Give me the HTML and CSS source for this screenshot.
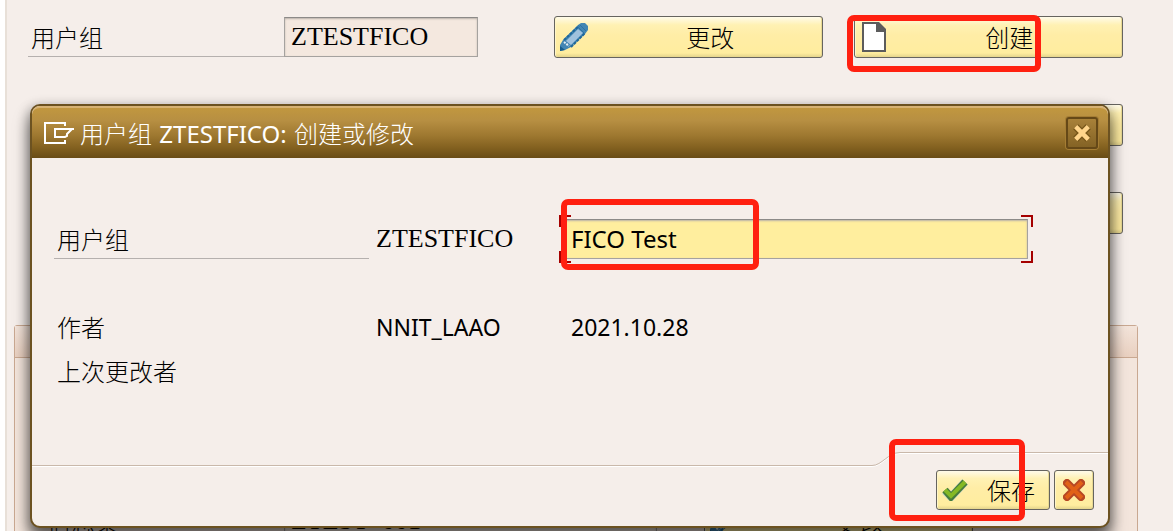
FILE: index.html
```html
<!DOCTYPE html>
<html lang="zh-CN">
<head>
<meta charset="utf-8">
<title>用户组</title>
<link rel="stylesheet" href="styles.css">
</head>
<body>
<svg class="defs" aria-hidden="true">
  <symbol id="pencil" viewBox="0 0 28 28">
    <path d="M0 28V22L3 17L18 2L21 0H25L28 3V7L25 11L11 24L5 27Z" fill="#4286b3"/>
    <path d="M6 18L18 6L23 10L11 22Z" fill="#9fc1dd"/>
    <path d="M4 17L19 3M11 24L25 10" fill="none" stroke="#1f679b" stroke-width="2" stroke-dasharray="3 1"/>
    <path d="M18 4L24 10M20 2L26 8" fill="none" stroke="#2b72a6" stroke-width="1"/>
    <path d="M4 19L9 23" fill="none" stroke="#e3eff5" stroke-width="2" stroke-dasharray="2 1"/>
    <path d="M0 28V23L5 27Z" fill="#165d8c"/>
  </symbol>
</svg>
<main class="page">
  <section class="rows">
    <div class="row">
      <label class="label" for="group">用户组</label>
      <input class="field mono" id="group" value="ZTESTFICO">
      <button class="btn edit"><svg class="pencil"><use href="#pencil"/></svg><span>更改</span></button>
      <div class="marked">
        <button class="btn create"><svg class="sheet" viewBox="0 0 24 30"><path d="M1 1H15L23 9V29H1Z" fill="#fff" stroke="#5c5c5c" stroke-width="2"/><path d="M14 0H17L24 7V10H14Z" fill="#5c5c5c"/></svg><span>创建</span></button>
        <i class="mark mark-create"></i>
      </div>
    </div>
    <div class="row"><button class="btn last" aria-label="显示"></button></div>
    <div class="row"><button class="btn last" aria-label="复制"></button></div>
  </section>
  <section class="panel">
    <div class="panel-head"></div>
    <div class="panel-body">
      <label class="label" for="infoset">信息集</label>
      <input class="field mono" id="infoset" value="ZTEST_001">
      <button class="btn edit"><svg class="pencil"><use href="#pencil"/></svg><span>更改</span></button>
    </div>
  </section>
</main>

<div class="dialog" role="dialog" aria-labelledby="dialog-title">
  <header class="titlebar">
    <svg class="title-icon" viewBox="0 0 30 22"><path d="M21 4V1H1V21H21V18M30 7H11V15H21L23 14V12L28 7" fill="none" stroke="#fff" stroke-width="2"/></svg>
    <h1 class="title" id="dialog-title">用户组 <span class="latin">ZTESTFICO:</span> 创建或修改</h1>
    <button class="close" aria-label="关闭"><svg viewBox="0 0 20 20"><path d="M3 3L17 17M17 3L3 17" stroke="#765519" stroke-width="8"/><path d="M3 3L17 17M17 3L3 17" stroke="#ffd58b" stroke-width="5"/></svg></button>
  </header>
  <div class="form">
    <label class="label" for="desc">用户组</label>
    <span class="value mono">ZTESTFICO</span>
    <div class="focus">
      <input class="field" id="desc" value="FICO Test">
      <i class="corner tl"></i><i class="corner tr"></i><i class="corner bl"></i><i class="corner br"></i>
      <i class="mark mark-field"></i>
    </div>
    <span class="name author">作者</span>
    <span class="value author">NNIT_LAAO</span>
    <span class="value date author">2021.10.28</span>
    <span class="name changer">上次更改者</span>
  </div>
  <footer class="footer">
    <div class="divider">
      <div class="line low"></div>
      <svg class="curve" viewBox="0 0 40 16"><path d="M0 14.500H2C12 14.500 18 1.500 30 1.500H40" fill="none" stroke="#fff"/><path d="M0 13.500H2C12 13.500 18 0.500 30 0.500H40" fill="none" stroke="#c9b8aa"/></svg>
      <div class="line high"></div>
    </div>
    <div class="actions">
      <button class="btn save"><svg class="check" viewBox="0 0 26 22"><path d="M3 12L9 18L23 3" fill="none" stroke="#c2d2cd" stroke-width="8"/><path d="M3 11L9 18L23 3" fill="none" stroke="#477c3a" stroke-width="7"/><path d="M3 11L9 17L23 3" fill="none" stroke="#85b925" stroke-width="4"/></svg><span>保存</span></button>
      <button class="btn cancel" aria-label="取消"><svg class="cross" viewBox="0 0 22 22"><path d="M4 4L18 18M18 4L4 18" stroke="#b64724" stroke-width="8" stroke-linecap="round"/><path d="M3 3L19 19M19 3L3 19" stroke="#e16117" stroke-width="4"/></svg></button>
    </div>
    <i class="mark mark-save"></i>
  </footer>
</div>
</body>
</html>
```
FILE: styles.css
```css
* { box-sizing: border-box; }
html { background: #fff; }
body {
  margin: 0;
  height: 100vh;
  overflow: hidden;
  position: relative;
  color: #000;
  font: 300 24px/40px "Noto Sans CJK SC", sans-serif;
}
.defs { position: absolute; width: 0; height: 0; }
button, input { font: inherit; color: inherit; margin: 0; border-radius: 0; }
.page {
  margin-left: 5px;
  min-height: 100vh;
  padding-top: 16px;
  border-left: 2px solid #e8e0d8;
  background: #f5eeea;
}
.rows { display: flex; flex-direction: column; gap: 46px; padding: 0 50px 0 21px; }
.row {
  display: grid;
  grid-template-columns: 256px 194px 1fr 1fr;
  align-items: center;
  height: 42px;
}
.row > .edit { margin-left: 76px; margin-right: -22px; }
.marked { position: relative; margin-left: 53px; }
.marked .btn { width: 100%; }
.last { grid-column: 4; margin-left: 53px; }
.label {
  display: block;
  height: 40px;
  padding-left: 3px;
  border-bottom: 1px solid #b5b0ae;
}
.field {
  width: 100%;
  min-width: 0;
  height: 40px;
  padding: 0 6px;
  border: 1px solid #a5a29f;
  border-top-color: #8c8a88;
  background: #f4e8df;
  box-shadow: inset 0 1px 2px #b9b1aa;
  outline: 0;
}
.mono { font-family: "Liberation Serif", serif; font-size: 26px; font-weight: 400; }
.btn {
  display: flex;
  align-items: center;
  height: 42px;
  padding: 0 5px;
  border: 1px solid #66645f;
  border-radius: 3px;
  background: linear-gradient(#fffbea, #fff1b3 20%, #ffeda6 45%, #ffed9f 90%, #e4d48c);
  box-shadow: inset 1px 0 #fff5c8, inset -1px 0 #e8d993;
}
.btn span { flex: 1; text-align: center; padding-left: 16px; }
.pencil { width: 28px; height: 28px; }
.create { padding-left: 7px; }
.sheet { width: 24px; height: 30px; }
.panel { margin: 91px 35px 0 7px; border: 1px solid #c9a891; border-radius: 3px 3px 0 0; background: #f3e5dc; }
.panel-head { height: 32px; border-bottom: 1px solid #c9a891; background: linear-gradient(#f3e4da, #e9d0c0); }
.panel-body {
  display: grid;
  grid-template-columns: 240px 373px 316px;
  align-items: center;
  height: 184px;
  padding: 142px 0 0 29px;
}
.panel-body .btn { margin-left: 47px; }

.dialog {
  position: absolute;
  top: 104px;
  left: 30px;
  right: 63px;
  border: 2px solid #6c5221;
  border-radius: 10px;
  background: #f5eeea;
  box-shadow: 0 12px 16px 0 rgba(0, 0, 0, .5), 0 4px 12px 2px rgba(0, 0, 0, .3);
}
.titlebar {
  display: flex;
  align-items: center;
  gap: 6px;
  height: 52px;
  padding: 0 10px 0 12px;
  border-radius: 8px 8px 0 0;
  border-top: 2px solid #d7b273;
  background: linear-gradient(#c1973f, #b78f42 25%, #9e7830 55%, #82601f 80%, #694c16);
}
.title-icon { width: 30px; height: 22px; }
.title { flex: 1; margin: 0; color: #fff; font-size: 24px; font-weight: 300; line-height: 40px; }
.latin { padding: 0 2px; font-family: "Noto Sans", sans-serif; font-weight: 400; }
.close {
  width: 32px;
  height: 32px;
  padding: 5px;
  border: 2px solid #654817;
  border-radius: 3px;
  background: linear-gradient(#a88139, #846325);
  box-shadow: 0 0 0 1px #a57d34;
}
.close svg { display: block; width: 18px; height: 18px; }
.form {
  display: grid;
  grid-template-columns: 315px 195px 1fr;
  grid-template-rows: repeat(4, 44px);
  align-items: center;
  padding: 59px 80px 59px 22px;
}
.name { padding-left: 3px; }
.author { grid-row: 3; }
.changer { grid-row: 4; }
.value { padding-left: 7px; }
.value:not(.mono) { font-family: "Noto Sans", sans-serif; font-size: 23px; font-weight: 400; }
.focus { position: relative; display: flex; }
.focus .field {
  background: #ffee9e;
  font-family: "Noto Sans", sans-serif;
  font-weight: 400;
}
.corner { position: absolute; width: 12px; height: 12px; border: 0 solid #a50000; }
.tl { top: -4px; left: -5px; border-width: 2px 0 0 2px; }
.tr { top: -4px; right: -5px; border-width: 2px 2px 0 0; }
.bl { bottom: -4px; left: -5px; border-width: 0 0 2px 2px; }
.br { bottom: -4px; right: -5px; border-width: 0 2px 2px 0; }

.footer { position: relative; padding-bottom: 16px; }
.divider { display: flex; height: 18px; }
.line { border-top: 1px solid #c9b8aa; box-shadow: inset 0 1px #fff; height: 3px; }
.low { flex: 1; margin-top: 13px; }
.high { width: 198px; }
.curve { width: 40px; height: 16px; }
.actions { display: flex; justify-content: flex-end; gap: 4px; padding-right: 14px; }
.actions .btn { height: 40px; }
.save { width: 114px; }
.save span { padding-left: 10px; }
.cancel { width: 40px; justify-content: center; }
.check { width: 26px; height: 22px; }
.cross { width: 22px; height: 22px; }

.mark { position: absolute; border: 6px solid #ff2010; border-radius: 7px; pointer-events: none; }
.mark-create { top: -1px; left: -7px; width: 194px; height: 57px; }
.mark-field { top: -20px; left: -3px; width: 198px; height: 71px; }
.mark-save { top: -13px; right: 83px; width: 136px; height: 82px; }
```
